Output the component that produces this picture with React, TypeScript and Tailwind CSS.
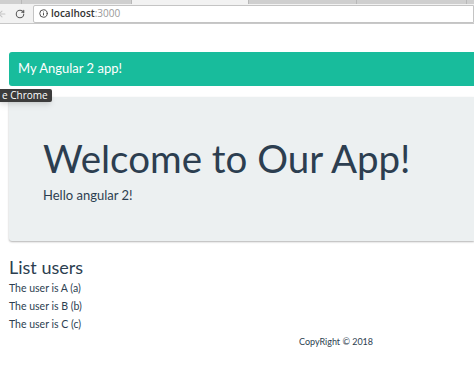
import { RotateCw, Info, ArrowRight } from 'lucide-react'

const users = [
  { name: 'A', id: 'a' },
  { name: 'B', id: 'b' },
  { name: 'C', id: 'c' },
]

export default function App() {
  return (
    <div className="relative w-[474px] h-[390px] overflow-hidden bg-white font-['Lato','Open_Sans',sans-serif] text-[#2c3e50]">
      {/* browser chrome */}
      <div className="flex h-[4px] bg-[#d6d6d6]">
        <div className="w-[22px] border-r border-[#b8b8b8] bg-[#cfcfcf]" />
        <div className="w-[110px] border-r border-[#b8b8b8] bg-[#cfcfcf]" />
        <div className="w-[116px] bg-[#f2f2f2]" />
        <div className="w-[109px] border-l border-r border-[#b8b8b8] bg-[#cfcfcf]" />
        <div className="w-[110px] border-r border-[#b8b8b8] bg-[#cfcfcf]" />
        <div className="flex-1 bg-[#cfcfcf]" />
      </div>
      <div className="flex h-[20px] items-center bg-[#f2f2f2] border-b border-[#c8c8c8]">
        <ArrowRight className="ml-[-3px] w-[10px] h-[10px] text-[#c4c4c4] rotate-180" strokeWidth={2.5} />
        <RotateCw className="ml-[8px] w-[10px] h-[10px] text-[#555]" strokeWidth={2.5} />
        <div className="ml-[8px] flex h-[18px] flex-1 items-center rounded-l-[2px] border border-[#c4c4c4] bg-white pl-[5px] text-[10px] font-['Open_Sans',sans-serif]">
          <Info className="w-[9px] h-[9px] text-[#444]" strokeWidth={2.5} />
          <span className="ml-[3px] font-semibold text-[#333]">localhost</span>
          <span className="text-[#999]">:3000</span>
        </div>
      </div>

      {/* page */}
      <div className="pl-[9px] pt-[28px]">
        <div className="flex h-[34px] items-center rounded-l-[3px] bg-[#18bc9c] pl-[9px] text-[13px] text-white">
          My Angular 2 app!
        </div>

        <div className="mt-[11px] h-[144px] rounded-l-[3px] bg-[#ecf0f1] pl-[34px] pt-[39px] shadow-[0_1px_2px_rgba(0,0,0,0.3)]">
          <h1 className="text-[38.5px] leading-[44px]">Welcome to Our App!</h1>
          <p className="mt-[6px] text-[13px] leading-[18px]">Hello angular 2!</p>
        </div>

        <h2 className="mt-[15px] text-[18px] leading-[22px]">List users</h2>
        <div className="mt-[3px] text-[10.5px] leading-[14px]">
          {users.map(u => (
            <p key={u.id} className="mb-[4px]">
              The user is {u.name} ({u.id})
            </p>
          ))}
        </div>
        <p className="mt-[1px] pl-[290px] text-[9px] leading-[14px]">CopyRight © 2018</p>
      </div>

      {/* tooltip */}
      <div className="absolute left-[-2px] top-[89px] rounded-[2px] bg-[#3c3c3c] px-[4px] text-[10px] leading-[13px] text-white shadow-md font-['Open_Sans',sans-serif]">
        e Chrome
      </div>
    </div>
  )
}
